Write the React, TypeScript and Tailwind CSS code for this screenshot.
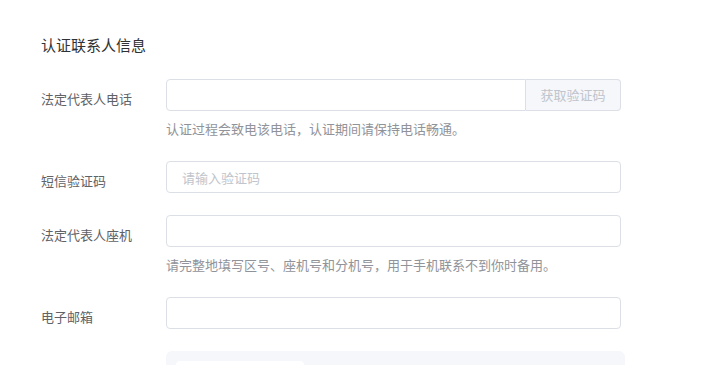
import React from "react";

const font = { fontFamily: '"Microsoft YaHei", "Noto Sans CJK SC", sans-serif' };

function Row({
  label,
  children,
  hint,
}: {
  label: string;
  children: React.ReactNode;
  hint?: string;
}) {
  return (
    <div className="flex mb-[22px]">
      <div className="w-[125px] shrink-0 pt-[10px] text-[13px] leading-5 text-[#606266]">{label}</div>
      <div className="w-[455px]">
        {children}
        {hint && <div className="mt-2 text-[13px] leading-5 text-[#909399]">{hint}</div>}
      </div>
    </div>
  );
}

function TextInput({ placeholder }: { placeholder?: string }) {
  return (
    <input
      placeholder={placeholder}
      className="w-full h-8 px-[15px] border border-[#dcdfe6] rounded text-[13px] text-[#606266] placeholder:text-[#c0c4cc] outline-none bg-white"
    />
  );
}

export default function App() {
  return (
    <div className="min-h-screen bg-white pl-[41px] pt-[35px]" style={font}>
      <h2 className="text-[15px] leading-5 text-[#303133] mb-6">认证联系人信息</h2>

      <Row label="法定代表人电话" hint="认证过程会致电该电话，认证期间请保持电话畅通。">
        <div className="flex h-8">
          <input className="flex-1 min-w-0 h-8 px-[15px] border border-[#dcdfe6] rounded-l text-[13px] outline-none" />
          <button className="w-[95px] h-8 border border-l-0 border-[#dcdfe6] rounded-r bg-[#f5f7fa] text-[13px] text-[#c0c4cc]">
            获取验证码
          </button>
        </div>
      </Row>

      <Row label="短信验证码">
        <TextInput placeholder="请输入验证码" />
      </Row>

      <Row label="法定代表人座机" hint="请完整地填写区号、座机号和分机号，用于手机联系不到你时备用。">
        <TextInput />
      </Row>

      <Row label="电子邮箱">
        <TextInput />
      </Row>

      <div className="flex">
        <div className="w-[125px] shrink-0" />
        <div className="w-[459px] bg-[#f5f7fa] rounded-md p-[10px]">
          <div className="w-[128px] h-[34px] bg-white rounded" />
        </div>
      </div>
    </div>
  );
}
